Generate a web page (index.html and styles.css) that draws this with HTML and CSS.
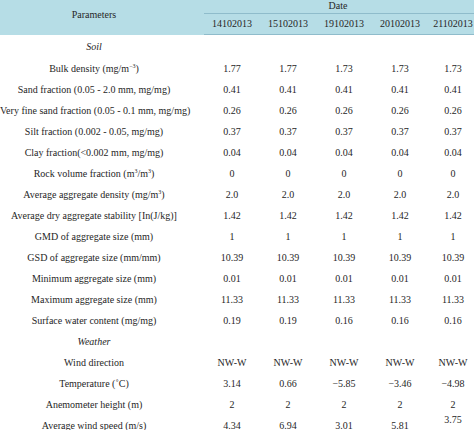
FILE: index.html
```html
<!DOCTYPE html>
<html lang="en">
<head>
<meta charset="utf-8">
<title>Parameters</title>
<link rel="stylesheet" href="styles.css">
</head>
<body>
<div class="frame">
<table class="data">
  <colgroup>
    <col class="c-label">
    <col class="c-val"><col class="c-val"><col class="c-val"><col class="c-val"><col class="c-last">
  </colgroup>
  <thead>
    <tr class="h1">
      <th rowspan="2" class="label">Parameters</th>
      <th colspan="5" class="date">Date</th>
    </tr>
    <tr class="h2">
      <th>14102013</th><th>15102013</th><th>19102013</th><th>20102013</th><th>21102013</th>
    </tr>
  </thead>
  <tbody>
    <tr class="first"><td class="label section">Soil</td><td></td><td></td><td></td><td></td><td></td></tr>
    <tr><td class="label">Bulk density (mg/m<sup>−3</sup>)</td><td>1.77</td><td>1.77</td><td>1.73</td><td>1.73</td><td>1.73</td></tr>
    <tr><td class="label">Sand fraction (0.05 - 2.0 mm, mg/mg)</td><td>0.41</td><td>0.41</td><td>0.41</td><td>0.41</td><td>0.41</td></tr>
    <tr><td class="label">Very fine sand fraction (0.05 - 0.1 mm, mg/mg)</td><td>0.26</td><td>0.26</td><td>0.26</td><td>0.26</td><td>0.26</td></tr>
    <tr><td class="label">Silt fraction (0.002 - 0.05, mg/mg)</td><td>0.37</td><td>0.37</td><td>0.37</td><td>0.37</td><td>0.37</td></tr>
    <tr><td class="label">Clay fraction(&lt;0.002 mm, mg/mg)</td><td>0.04</td><td>0.04</td><td>0.04</td><td>0.04</td><td>0.04</td></tr>
    <tr><td class="label">Rock volume fraction (m<sup>3</sup>/m<sup>3</sup>)</td><td>0</td><td>0</td><td>0</td><td>0</td><td>0</td></tr>
    <tr><td class="label">Average aggregate density (mg/m<sup>3</sup>)</td><td>2.0</td><td>2.0</td><td>2.0</td><td>2.0</td><td>2.0</td></tr>
    <tr><td class="label">Average dry aggregate stability [In(J/kg)]</td><td>1.42</td><td>1.42</td><td>1.42</td><td>1.42</td><td>1.42</td></tr>
    <tr><td class="label">GMD of aggregate size (mm)</td><td>1</td><td>1</td><td>1</td><td>1</td><td>1</td></tr>
    <tr><td class="label">GSD of aggregate size (mm/mm)</td><td>10.39</td><td>10.39</td><td>10.39</td><td>10.39</td><td>10.39</td></tr>
    <tr><td class="label">Minimum aggregate size (mm)</td><td>0.01</td><td>0.01</td><td>0.01</td><td>0.01</td><td>0.01</td></tr>
    <tr><td class="label">Maximum aggregate size (mm)</td><td>11.33</td><td>11.33</td><td>11.33</td><td>11.33</td><td>11.33</td></tr>
    <tr><td class="label">Surface water content (mg/mg)</td><td>0.19</td><td>0.19</td><td>0.16</td><td>0.16</td><td>0.16</td></tr>
    <tr><td class="label section">Weather</td><td></td><td></td><td></td><td></td><td></td></tr>
    <tr><td class="label">Wind direction</td><td>NW-W</td><td>NW-W</td><td>NW-W</td><td>NW-W</td><td>NW-W</td></tr>
    <tr><td class="label">Temperature (˚C)</td><td>3.14</td><td>0.66</td><td>−5.85</td><td>−3.46</td><td>−4.98</td></tr>
    <tr><td class="label">Anemometer height (m)</td><td>2</td><td>2</td><td>2</td><td>2</td><td>2</td></tr>
    <tr><td class="label">Average wind speed (m/s)</td><td>4.34</td><td>6.94</td><td>3.01</td><td>5.81</td><td class="raise">3.75</td></tr>
  </tbody>
</table>
</div>
</body>
</html>
```

FILE: styles.css
```css
html, body {
  margin: 0;
  padding: 0;
  background: #ffffff;
}

.frame {
  width: 474px;
  height: 430px;
  overflow: hidden;
}

.data {
  border-collapse: collapse;
  table-layout: fixed;
  width: 478px;
  font-family: "Liberation Serif", serif;
  font-size: 10px;
  color: #262626;
}

.c-label { width: 204px; }
.c-val { width: 56px; }
.c-last { width: 50px; }

.data th,
.data td {
  padding: 0;
  text-align: center;
  white-space: nowrap;
  line-height: 10px;
  font-weight: normal;
}

.data thead tr {
  background: #b6dde6;
}

.data thead .h1 th {
  height: 13px;
  vertical-align: middle;
}

.data thead .h1 .date {
  border-bottom: 1px solid #8fbccb;
  padding-right: 6px;
  vertical-align: top;
  padding-top: 1px;
  height: 12px;
}

.data thead .h1 .label {
  padding-right: 16px;
  vertical-align: top;
  padding-top: 10px;
}

.data thead .h2 th {
  height: 20px;
  border-bottom: 1px solid #8fbccb;
}

.data tbody td {
  height: 21px;
  vertical-align: middle;
}

.data tbody .first td {
  padding-top: 2px;
}

.data td.label {
  padding-right: 16px;
}

.data td.section {
  font-style: italic;
}

.data td.raise {
  vertical-align: top;
  padding-top: 0;
}

.data sup {
  font-size: 6px;
  line-height: 0;
  vertical-align: 4px;
}
```
